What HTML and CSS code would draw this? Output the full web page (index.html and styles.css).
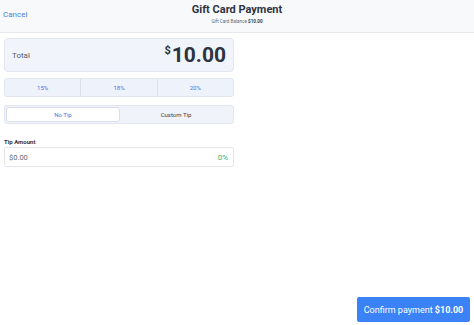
FILE: index.html
```html
<!DOCTYPE html>
<html>
<head>
<meta charset="utf-8">
<link rel="stylesheet" href="styles.css">
</head>
<body>
<div class="page">
  <header class="header">
    <a class="cancel">Cancel</a>
    <div class="titles">
      <div class="title">Gift Card Payment</div>
      <div class="subtitle">Gift Card Balance <b>$10.00</b></div>
    </div>
  </header>
  <main class="content">
    <section class="left">
      <div class="total-card">
        <span class="total-label">Total</span>
        <span class="total-amount"><sup class="cur">$</sup>10.00</span>
      </div>
      <div class="pct-row">
        <div class="pct">15%</div>
        <div class="pct">18%</div>
        <div class="pct">20%</div>
      </div>
      <div class="toggle">
        <div class="opt active">No Tip</div>
        <div class="opt">Custom Tip</div>
      </div>
      <div class="tip-label">Tip Amount</div>
      <div class="tip-input">
        <span class="tip-value">$0.00</span>
        <span class="tip-pct">0%</span>
      </div>
    </section>
  </main>
  <footer class="footer">
    <button class="confirm">Confirm payment <b>$10.00</b></button>
  </footer>
</div>
</body>
</html>
```
FILE: styles.css
```css
* { box-sizing: border-box; }
html, body { margin: 0; padding: 0; }
body {
  font-family: Roboto, "Liberation Sans", sans-serif;
  background: #ffffff;
  color: #2d3340;
  width: 474px;
  height: 325px;
  overflow: hidden;
}
.page {
  display: flex;
  flex-direction: column;
  height: 325px;
}
.header {
  position: relative;
  height: 33px;
  background: #f8f9fb;
  border-bottom: 1px solid #e6e8ec;
  display: flex;
  justify-content: center;
  align-items: flex-start;
}
.cancel {
  position: absolute;
  left: 3px;
  top: 10px;
  font-size: 8px;
  line-height: 10px;
  color: #4a7fe0;
}
.titles {
  display: flex;
  flex-direction: column;
  align-items: center;
  padding-top: 3px;
}
.title {
  font-size: 11px;
  font-weight: 700;
  color: #2d3340;
  line-height: 14px;
}
.subtitle {
  font-size: 4.6px;
  color: #666b75;
  line-height: 10px;
}
.subtitle b { color: #3a3f4a; }
.content {
  flex: 1;
  padding: 5px 0 0 4px;
}
.left {
  width: 230px;
  display: flex;
  flex-direction: column;
}
.total-card {
  height: 34px;
  background: #f1f4fb;
  border: 1px solid #e2e6ee;
  border-radius: 4px;
  display: flex;
  justify-content: space-between;
  align-items: center;
  padding: 0 7px 0 7px;
}
.total-label {
  font-size: 8px;
  color: #555b66;
}
.total-amount {
  font-size: 21px;
  font-weight: 700;
  color: #2d3340;
  line-height: 1;
}
.cur {
  font-size: 11px;
  vertical-align: 8px;
  line-height: 0;
  margin-right: 1px;
}
.pct-row {
  margin-top: 6px;
  height: 19px;
  background: #eef2fb;
  border: 1px solid #e1e6f0;
  border-radius: 3px;
  display: flex;
}
.pct {
  flex: 1;
  display: flex;
  align-items: center;
  justify-content: center;
  font-size: 6px;
  color: #3b78e7;
  border-left: 1px solid #dde2ea;
}
.pct:first-child { border-left: none; }
.toggle {
  margin-top: 8px;
  height: 19px;
  background: #f0f3f9;
  border: 1px solid #e1e6f0;
  border-radius: 3px;
  display: flex;
  padding: 1px;
}
.opt {
  flex: 1;
  display: flex;
  align-items: center;
  justify-content: center;
  font-size: 6px;
  color: #3a3f4a;
  border-radius: 3px;
}
.opt.active {
  background: #ffffff;
  color: #3b78e7;
  border: 1px solid #d9dee8;
}
.tip-label {
  margin-top: 14px;
  font-size: 6px;
  font-weight: 700;
  color: #2d3340;
  line-height: 8px;
}
.tip-input {
  margin-top: 1px;
  height: 20px;
  border: 1px solid #e3e6eb;
  border-radius: 2px;
  display: flex;
  align-items: center;
  justify-content: space-between;
  padding: 0 5px 0 4px;
}
.tip-value {
  font-size: 7.5px;
  color: #666b75;
}
.tip-pct {
  font-size: 8px;
  color: #2bb673;
}
.footer {
  display: flex;
  justify-content: flex-end;
  padding: 0 4px 3px 0;
}
.confirm {
  width: 113px;
  height: 25px;
  background: #3b82f6;
  color: #ffffff;
  border: none;
  border-radius: 2px;
  font-family: Roboto, "Liberation Sans", sans-serif;
  font-size: 9px;
  padding: 0;
}
```
